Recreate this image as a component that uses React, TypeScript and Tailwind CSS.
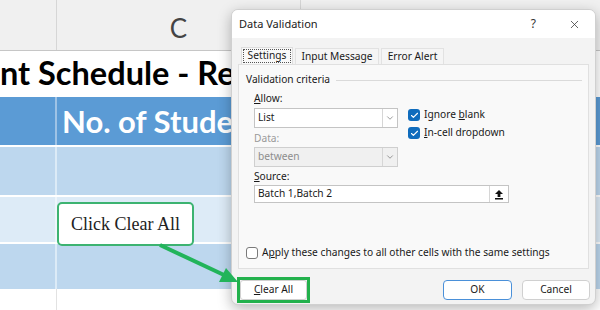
import { Check, ChevronDown, X } from "lucide-react";

function Checkbox({ checked }: { checked: boolean }) {
  return checked ? (
    <span className="flex h-[12px] w-[12px] shrink-0 items-center justify-center rounded-[3px] bg-[#0f6cbd]">
      <Check size={9} strokeWidth={3} className="text-white" />
    </span>
  ) : (
    <span className="h-[12px] w-[12px] shrink-0 rounded-[3px] border border-[#7a7a7a] bg-white" />
  );
}

// label with one underlined access-key letter, kept as sibling spans
function Label({ before = "", keyChar, after }: { before?: string; keyChar: string; after: string }) {
  return (
    <div className="flex items-center whitespace-pre">
      {before && <span>{before}</span>}
      <span className="underline">{keyChar}</span>
      <span>{after}</span>
    </div>
  );
}

function Select({ value, disabled }: { value: string; disabled?: boolean }) {
  return (
    <div
      className={`flex h-[20px] w-[144px] items-stretch border ${
        disabled ? "border-[#cfcfcf] bg-[#f0f0f0] text-[#8d8d8d]" : "border-[#c4c4c4] bg-white text-[#1a1a1a]"
      }`}
    >
      <span className="flex flex-1 items-center pl-[3px]">{value}</span>
      <span className="flex w-[15px] items-center justify-center border-l border-[#d6d6d6]">
        <ChevronDown size={10} strokeWidth={1.5} className="text-[#606060]" />
      </span>
    </div>
  );
}

export default function App() {
  return (
    <div className="relative h-[310px] w-[600px] overflow-hidden bg-white font-['Lato',sans-serif]">
      {/* Spreadsheet behind */}
      <div className="flex h-[51px] border-b border-[#c6c6c6] bg-[#f0f0f0]">
        <div className="w-[57px] border-r border-[#d6d6d6]" />
        <div className="flex w-[243px] items-center justify-center pt-[6px] text-[26px] text-[#444]">C</div>
        <div className="flex-1 border-l border-[#d6d6d6]" />
      </div>
      <div className="flex h-[46px] items-center whitespace-nowrap pb-[2px] text-[32.5px] font-bold text-black">
        nt Schedule - Re
      </div>
      <div className="flex h-[48px] bg-[#5b9bd5]">
        <div className="w-[57px] border-r-2 border-[#9ec3e6]" />
        <div className="flex items-center whitespace-nowrap pl-[5px] text-[31px] font-bold text-white">
          No. of Stude
        </div>
      </div>
      <div className="mt-[2px] flex h-[48px] bg-[#bdd7ee]">
        <div className="w-[57px] border-r-2 border-[#dcebf7]" />
      </div>
      <div className="mt-[2px] flex h-[45px] bg-[#ddebf7]">
        <div className="w-[57px] border-r-2 border-[#eef5fb]" />
      </div>
      <div className="mt-[2px] flex h-[45px] bg-[#bdd7ee]">
        <div className="w-[57px] border-r-2 border-[#dcebf7]" />
      </div>
      <div className="flex h-[30px]">
        <div className="w-[57px] border-r border-[#e2e2e2]" />
      </div>

      {/* Data Validation dialog */}
      <div className="absolute left-[231px] top-[9px] flex h-[296px] w-[365px] flex-col overflow-hidden rounded-[7px] border border-[#d0d0d0] bg-[#f3f3f3] font-['Noto_Sans',sans-serif] text-[10.2px] text-[#1a1a1a] shadow-[0_4px_14px_rgba(0,0,0,0.28)]">
        <div className="flex h-[28px] shrink-0 items-center justify-between bg-white pl-[7px] pr-[14px]">
          <span className="text-[11px]">Data Validation</span>
          <div className="flex items-center gap-[32px]">
            <span className="text-[12px] text-[#333]">?</span>
            <X size={13} strokeWidth={1.4} className="text-[#333]" />
          </div>
        </div>

        {/* Tabs */}
        <div className="mt-[9px] flex h-[17px] shrink-0 items-end gap-[2px] pl-[9px]">
          <div className="h-[17px] w-[52px] border border-b-0 border-[#dedede] bg-[#f9f9f9] px-[1px] pt-px">
            <div className="flex h-[14px] items-center justify-center border border-dotted border-[#555]">Settings</div>
          </div>
          <div className="flex h-[16px] w-[84px] items-center justify-center border border-b-0 border-[#e2e2e2] bg-[#f5f5f5]">
            Input Message
          </div>
          <div className="flex h-[16px] w-[63px] items-center justify-center border border-b-0 border-[#e2e2e2] bg-[#f5f5f5]">
            Error Alert
          </div>
        </div>

        {/* Settings panel */}
        <div className="mx-[6px] flex h-[205px] shrink-0 flex-col border border-[#e0e0e0] bg-[#f9f9f9] pb-[8px]">
          <div className="mt-[8px] flex h-[14px] items-center gap-[6px] pl-[7px] pr-[6px]">
            <span>Validation criteria</span>
            <span className="h-px flex-1 bg-[#dadada]" />
          </div>

          <div className="mt-[5px] pl-[15px]">
            <div className="flex h-[14px] items-center">
              <Label keyChar="A" after="llow:" />
            </div>
            <div className="mt-[2px] flex gap-[10px]">
              <div className="flex flex-col">
                <Select value="List" />
                <div className="mt-[4px] flex h-[14px] items-center text-[#9a9a9a]">Data:</div>
                <div className="mt-[1px]">
                  <Select value="between" disabled />
                </div>
              </div>
              <div className="flex flex-col gap-[4px]">
                <div className="flex h-[14px] items-center gap-[4px]">
                  <Checkbox checked />
                  <Label before="Ignore " keyChar="b" after="lank" />
                </div>
                <div className="flex h-[14px] items-center gap-[4px]">
                  <Checkbox checked />
                  <Label keyChar="I" after="n-cell dropdown" />
                </div>
              </div>
            </div>
            <div className="mt-[3px] flex h-[14px] items-center">
              <Label keyChar="S" after="ource:" />
            </div>
            <div className="mt-[1px] flex h-[18px] w-[255px] items-stretch border border-[#c4c4c4] bg-white">
              <span className="flex flex-1 items-center pl-[3px]">Batch 1,Batch 2</span>
              <span className="flex w-[19px] items-center justify-center border-l border-[#d6d6d6]">
                <svg width="10" height="11" viewBox="0 0 10 11">
                  <path d="M5 1 L9 5 H6.4 V8 H3.6 V5 H1 Z" fill="#111" />
                  <rect x="1" y="9" width="8" height="1.5" fill="#111" />
                </svg>
              </span>
            </div>
          </div>

          <div className="mt-auto flex h-[14px] items-center gap-[4px] pl-[7px]">
            <Checkbox checked={false} />
            <Label before="A" keyChar="p" after="ply these changes to all other cells with the same settings" />
          </div>
        </div>

        {/* Buttons */}
        <div className="mt-[8px] flex items-center pl-[5px] pr-[5px]">
          <div className="border-[3px] border-[#22b14c]">
            <button className="flex h-[20px] w-[67px] items-center justify-center rounded-[3px] border border-[#d0d0d0] bg-white">
              <Label keyChar="C" after="lear All" />
            </button>
          </div>
          <div className="ml-auto flex gap-[10px]">
            <button className="flex h-[20px] w-[69px] items-center justify-center rounded-[4px] border border-[#4a90d9] bg-white">
              OK
            </button>
            <button className="flex h-[20px] w-[68px] items-center justify-center rounded-[4px] border border-[#d0d0d0] bg-white">
              Cancel
            </button>
          </div>
        </div>
      </div>

      {/* Callout */}
      <div className="absolute left-[57px] top-[202px] flex h-[44px] w-[137px] items-center justify-center rounded-[5px] border-2 border-[#3cb371] bg-white font-['Liberation_Serif',serif] text-[18px] text-[#222]">
        Click Clear All
      </div>
      <svg className="pointer-events-none absolute left-0 top-0" width="600" height="310">
        <line x1="160" y1="245" x2="224" y2="275" stroke="#22b45a" strokeWidth="4" />
        <polygon points="238,282 219,282 226,268" fill="#22b45a" />
      </svg>
    </div>
  );
}
